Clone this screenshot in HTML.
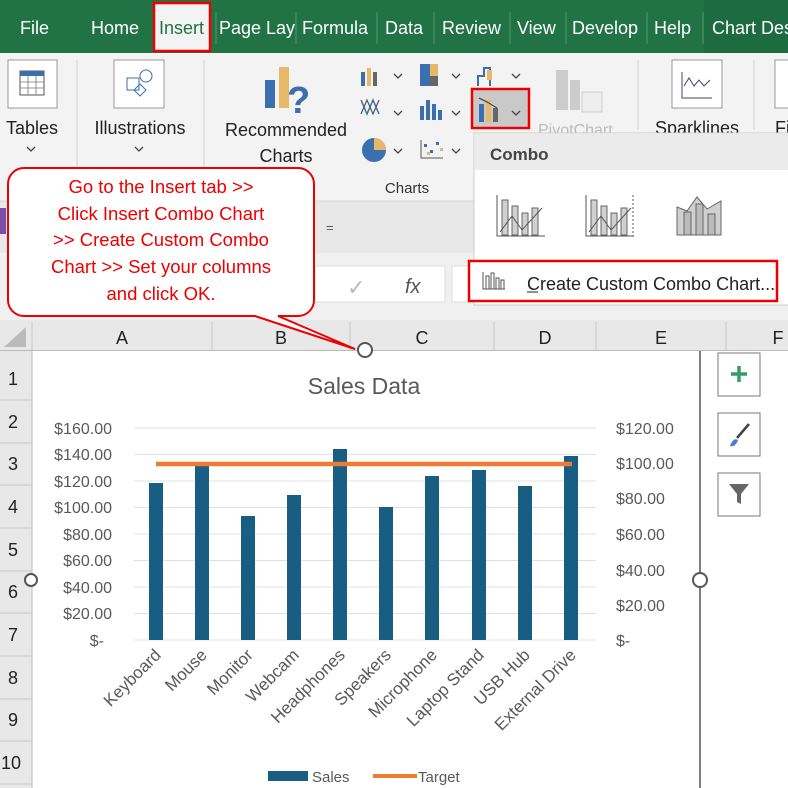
<!DOCTYPE html>
<html><head><meta charset="utf-8"><style>
html,body{margin:0;padding:0;width:788px;height:788px;overflow:hidden;background:#fff}
svg{display:block}
text{font-family:"Liberation Sans",sans-serif}
</style></head><body>
<svg width="788" height="788" viewBox="0 0 788 788" xmlns="http://www.w3.org/2000/svg">
<rect x="0" y="0" width="788" height="53" fill="#217346"/>
<rect x="704" y="0" width="84" height="53" fill="#1d6b40"/>
<rect x="154" y="3" width="56" height="48" fill="#f3f3f3"/>
<rect x="154" y="3" width="56" height="48" fill="none" stroke="#e00" stroke-width="2.5"/>
<g font-size="18" fill="#fff">
<text x="20" y="34">File</text>
<text x="91" y="34">Home</text>
<text x="159" y="34" fill="#217346">Insert</text>
<text x="219" y="34">Page Lay</text>
<text x="302" y="34">Formula</text>
<text x="385" y="34">Data</text>
<text x="442" y="34">Review</text>
<text x="517" y="34">View</text>
<text x="572" y="34">Develop</text>
<text x="654" y="34">Help</text>
<text x="712" y="34">Chart Des</text>
</g>
<g stroke="#4e9a6f" stroke-width="1">
<line x1="216" y1="12" x2="216" y2="44"/><line x1="296" y1="12" x2="296" y2="44"/><line x1="377" y1="12" x2="377" y2="44"/><line x1="434" y1="12" x2="434" y2="44"/><line x1="510" y1="12" x2="510" y2="44"/><line x1="566" y1="12" x2="566" y2="44"/><line x1="647" y1="12" x2="647" y2="44"/><line x1="703" y1="12" x2="703" y2="44"/>
</g>
<rect x="0" y="53" width="788" height="148" fill="#f3f3f3"/>
<g stroke="#d0d0d0"><line x1="77" y1="60" x2="77" y2="195"/><line x1="204" y1="60" x2="204" y2="195"/><line x1="638" y1="60" x2="638" y2="130"/><line x1="754" y1="60" x2="754" y2="130"/></g>
<rect x="8" y="60" width="49" height="48" fill="#fff" stroke="#999"/>
<rect x="20" y="71" width="24" height="24" fill="#fff" stroke="#555"/><rect x="20" y="71" width="24" height="5" fill="#3c6fb0"/>
<g stroke="#777" stroke-width="0.8"><line x1="20" y1="82" x2="44" y2="82"/><line x1="20" y1="88" x2="44" y2="88"/><line x1="28" y1="76" x2="28" y2="95"/><line x1="36" y1="76" x2="36" y2="95"/></g>
<rect x="114" y="60" width="50" height="48" fill="#fff" stroke="#999"/>
<rect x="127" y="78" width="12" height="12" fill="none" stroke="#3c6fb0"/><circle cx="146" cy="76" r="6" fill="none" stroke="#3c6fb0"/><path d="M140 84 l6 6 -6 6 -6 -6z" fill="none" stroke="#3c6fb0"/>
<g font-size="18" fill="#222">
<text x="32" y="134" text-anchor="middle">Tables</text>
<text x="140" y="134" text-anchor="middle">Illustrations</text>
<text x="286" y="136" text-anchor="middle">Recommended</text>
<text x="286" y="162" text-anchor="middle">Charts</text>
<text x="697" y="134" text-anchor="middle">Sparklines</text>
<text x="775" y="134">Fi</text>
</g>
<text x="407" y="193" font-size="15" fill="#333" text-anchor="middle">Charts</text>
<text x="538" y="135" font-size="16" fill="#bbb">PivotChart</text>
<g fill="none" stroke="#444" stroke-width="1.3"><path d="M27 147l4 4 4-4"/><path d="M135 147l4 4 4-4"/></g>
<rect x="265" y="80" width="10" height="28" fill="#3c6fb0"/><rect x="279" y="67" width="10" height="41" fill="#e8b86a"/><text x="287" y="113" font-size="38" font-weight="bold" fill="#3c6fb0">?</text>
<g>
<rect x="361" y="72" width="4" height="14" fill="#3c6fb0"/><rect x="367" y="68" width="4" height="18" fill="#e8b86a"/><rect x="373" y="72" width="4" height="14" fill="#666"/>
<rect x="420" y="64" width="10" height="22" fill="#3c6fb0"/><rect x="430" y="64" width="8" height="12" fill="#e8b86a"/><rect x="430" y="76" width="8" height="10" fill="#666"/>
<path d="M478 86v-10h6v-8h6v18" fill="none" stroke="#3c6fb0" stroke-width="2"/><rect x="487" y="70" width="5" height="10" fill="#e8b86a"/>
<path d="M361 100l6 14 6-14 6 14" fill="none" stroke="#3c6fb0" stroke-width="1.5"/><path d="M361 114l6-14 6 14 6-14" fill="none" stroke="#555" stroke-width="1.2"/>
<rect x="420" y="106" width="4" height="14" fill="#3c6fb0"/><rect x="426" y="100" width="4" height="20" fill="#3c6fb0"/><rect x="432" y="104" width="4" height="16" fill="#3c6fb0"/><rect x="438" y="110" width="4" height="10" fill="#3c6fb0"/>
<rect x="472" y="89" width="57" height="39" fill="#c9c9c9"/>
<rect x="479" y="104" width="5" height="18" fill="#3c6fb0"/><rect x="486" y="100" width="5" height="22" fill="#e8b86a"/><rect x="493" y="108" width="5" height="14" fill="#666"/><path d="M479 98l8 4 10 6" stroke="#333" fill="none"/>
<rect x="472" y="89" width="57" height="39" fill="none" stroke="#e00" stroke-width="2.5"/>
<circle cx="374" cy="150" r="12" fill="#3c6fb0"/><path d="M374 150v-12a12 12 0 0 1 12 12z" fill="#e8b86a"/>
<g fill="#3c6fb0"><rect x="424" y="144" width="3" height="3"/><rect x="430" y="150" width="3" height="3"/><rect x="436" y="142" width="3" height="3"/></g><g fill="#e8b86a"><rect x="427" y="152" width="3" height="3"/><rect x="440" y="148" width="3" height="3"/></g><path d="M421 140v18h22" fill="none" stroke="#555"/>
<g fill="none" stroke="#444" stroke-width="1.3"><path d="M394 74l4 4 4-4"/><path d="M452 74l4 4 4-4"/><path d="M512 74l4 4 4-4"/><path d="M394 111l4 4 4-4"/><path d="M452 111l4 4 4-4"/><path d="M512 111l4 4 4-4"/><path d="M394 149l4 4 4-4"/><path d="M452 149l4 4 4-4"/></g>
<rect x="556" y="70" width="12" height="40" fill="#ccc"/><rect x="570" y="80" width="10" height="30" fill="#ccc"/><rect x="582" y="92" width="20" height="20" fill="#eee" stroke="#ccc"/>
<rect x="672" y="60" width="50" height="48" fill="#fff" stroke="#999"/><path d="M682 72v26h30M684 86l5-8 5 8 5-6 5 6 6-6" fill="none" stroke="#446"/>
<rect x="775" y="60" width="20" height="48" fill="#fff" stroke="#999"/>
</g>
<rect x="0" y="201" width="788" height="52" fill="#e8e8e8"/>
<line x1="0" y1="201" x2="788" y2="201" stroke="#d6d6d6"/>
<text x="326" y="232" font-size="13" fill="#555">=</text>
<rect x="0" y="208" width="6" height="26" fill="#7a4fa8"/>
<rect x="0" y="253" width="788" height="67" fill="#f0f0f0"/>
<rect x="315" y="266" width="130" height="36" fill="#fff" stroke="#ddd"/>
<text x="347" y="295" font-size="22" fill="#bbb">✓</text>
<text x="405" y="293" font-size="20" font-style="italic" font-family="Liberation Serif" fill="#555">fx</text>
<rect x="452" y="266" width="336" height="36" fill="#fff" stroke="#ddd"/>
<rect x="0" y="320" width="788" height="31" fill="#e8e8e8"/>
<line x1="0" y1="350.5" x2="788" y2="350.5" stroke="#bbb"/>
<g stroke="#c8c8c8"><line x1="32" y1="322" x2="32" y2="350"/><line x1="212" y1="322" x2="212" y2="350"/><line x1="350" y1="322" x2="350" y2="350"/><line x1="494" y1="322" x2="494" y2="350"/><line x1="596" y1="322" x2="596" y2="350"/><line x1="726" y1="322" x2="726" y2="350"/></g>
<path d="M4 347l22-20v20z" fill="#bbb"/>
<g font-size="18" fill="#222" text-anchor="middle"><text x="122" y="344">A</text><text x="281" y="344">B</text><text x="422" y="344">C</text><text x="545" y="344">D</text><text x="661" y="344">E</text><text x="778" y="344">F</text></g>
<rect x="0" y="351" width="32" height="437" fill="#e8e8e8"/>
<line x1="32" y1="351" x2="32" y2="788" stroke="#bbb"/>
<g stroke="#c8c8c8"><line x1="0" y1="400" x2="32" y2="400"/><line x1="0" y1="443" x2="32" y2="443"/><line x1="0" y1="485" x2="32" y2="485"/><line x1="0" y1="528" x2="32" y2="528"/><line x1="0" y1="571" x2="32" y2="571"/><line x1="0" y1="613" x2="32" y2="613"/><line x1="0" y1="656" x2="32" y2="656"/><line x1="0" y1="699" x2="32" y2="699"/><line x1="0" y1="741" x2="32" y2="741"/><line x1="0" y1="784" x2="32" y2="784"/></g>
<g font-size="18" fill="#222" text-anchor="middle"><text x="13" y="385">1</text><text x="13" y="428">2</text><text x="13" y="470">3</text><text x="13" y="513">4</text><text x="13" y="556">5</text><text x="13" y="598">6</text><text x="13" y="641">7</text><text x="13" y="684">8</text><text x="13" y="726">9</text><text x="11" y="769">10</text></g>
<line x1="700" y1="351" x2="700" y2="788" stroke="#555" stroke-width="1.5"/>
<circle cx="365" cy="350" r="7" fill="#fff" stroke="#555" stroke-width="2"/>
<circle cx="700" cy="580" r="7" fill="#fff" stroke="#555" stroke-width="2"/>
<circle cx="31" cy="580" r="6" fill="#fff" stroke="#555" stroke-width="2"/>
<text x="364" y="394" font-size="23" fill="#595959" text-anchor="middle">Sales Data</text>
<g stroke="#e0e0e0"><line x1="134" y1="428" x2="596" y2="428"/><line x1="134" y1="454.5" x2="596" y2="454.5"/><line x1="134" y1="481" x2="596" y2="481"/><line x1="134" y1="507.5" x2="596" y2="507.5"/><line x1="134" y1="534" x2="596" y2="534"/><line x1="134" y1="560.5" x2="596" y2="560.5"/><line x1="134" y1="587" x2="596" y2="587"/><line x1="134" y1="613.5" x2="596" y2="613.5"/><line x1="134" y1="640" x2="596" y2="640"/></g>
<g font-size="16" fill="#595959" text-anchor="end"><text x="112" y="434">$160.00</text><text x="112" y="460">$140.00</text><text x="112" y="487">$120.00</text><text x="112" y="513">$100.00</text><text x="112" y="540">$80.00</text><text x="112" y="566">$60.00</text><text x="112" y="593">$40.00</text><text x="112" y="619">$20.00</text><text x="104" y="646">$-</text></g>
<g font-size="16" fill="#595959"><text x="616" y="434">$120.00</text><text x="616" y="469">$100.00</text><text x="616" y="504">$80.00</text><text x="616" y="540">$60.00</text><text x="616" y="576">$40.00</text><text x="616" y="611">$20.00</text><text x="616" y="646">$-</text></g>
<g fill="#175e82">
<rect x="149" y="483" width="14" height="157"/><rect x="195" y="465" width="14" height="175"/><rect x="241" y="516" width="14" height="124"/><rect x="287" y="495" width="14" height="145"/><rect x="333" y="449" width="14" height="191"/><rect x="379" y="507" width="14" height="133"/><rect x="425" y="476" width="14" height="164"/><rect x="472" y="470" width="14" height="170"/><rect x="518" y="486" width="14" height="154"/><rect x="564" y="456" width="14" height="184"/>
</g>
<line x1="156" y1="464" x2="572" y2="464" stroke="#ed7d31" stroke-width="4.5"/>
<g font-size="17" fill="#595959" text-anchor="end">
<text transform="translate(162,656) rotate(-45)">Keyboard</text>
<text transform="translate(208,656) rotate(-45)">Mouse</text>
<text transform="translate(254,656) rotate(-45)">Monitor</text>
<text transform="translate(300,656) rotate(-45)">Webcam</text>
<text transform="translate(346,656) rotate(-45)">Headphones</text>
<text transform="translate(392,656) rotate(-45)">Speakers</text>
<text transform="translate(438,656) rotate(-45)">Microphone</text>
<text transform="translate(485,656) rotate(-45)">Laptop Stand</text>
<text transform="translate(531,656) rotate(-45)">USB Hub</text>
<text transform="translate(577,656) rotate(-45)">External Drive</text>
</g>
<rect x="268" y="771" width="40" height="10" fill="#175e82"/><text x="312" y="782" font-size="15" fill="#595959">Sales</text>
<line x1="373" y1="776" x2="417" y2="776" stroke="#ed7d31" stroke-width="4"/><text x="418" y="782" font-size="15" fill="#595959">Target</text>
<g fill="#fff" stroke="#777"><rect x="718" y="353" width="42" height="43"/><rect x="718" y="413" width="42" height="43"/><rect x="718" y="473" width="42" height="43"/></g>
<path d="M739 366v16M731 374h16" stroke="#3a9a6a" stroke-width="3.5"/>
<path d="M749 424l-12 14" stroke="#444" stroke-width="2.5"/><path d="M730 446c2-6 5-8 8-6-1 4-4 7-8 6z" fill="#4a7fd0"/>
<path d="M729 484h20l-8 10v10l-4-2v-8z" fill="#666"/>
<rect x="474" y="133" width="320" height="172" fill="#fff" stroke="#ccc"/>
<rect x="475" y="134" width="313" height="36" fill="#ebebeb"/>
<text x="490" y="160" font-size="17" font-weight="bold" fill="#444">Combo</text>
<g fill="#d0d0d0" stroke="#666" stroke-width="1">
<rect x="502" y="200" width="6" height="35"/><rect x="512" y="206" width="6" height="29"/><rect x="522" y="213" width="6" height="22"/><rect x="532" y="208" width="6" height="27"/>
<rect x="591" y="200" width="6" height="35"/><rect x="601" y="206" width="6" height="29"/><rect x="611" y="213" width="6" height="22"/><rect x="621" y="208" width="6" height="27"/>
<path d="M677 235v-28l10 4 10-14 10 12 14-8v34z"/>
<rect x="684" y="212" width="7" height="23" fill="#bbb"/><rect x="696" y="204" width="7" height="31" fill="#bbb"/><rect x="708" y="214" width="7" height="21" fill="#bbb"/>
</g>
<g fill="none" stroke="#555"><path d="M497 195v41h48"/><path d="M500 232l12-16 10 14 20-22"/><path d="M586 195v41h48"/><path d="M589 232l12-16 10 14 20-22"/><path d="M633 195v41" stroke-dasharray="2 2"/></g>
<rect x="469" y="261" width="308" height="40" fill="#fff" stroke="#e00" stroke-width="2.5"/>
<g fill="none" stroke="#555"><path d="M483 272v17h22"/><rect x="486" y="276" width="3" height="13"/><rect x="491" y="273" width="3" height="16"/><rect x="496" y="278" width="3" height="11"/><rect x="501" y="280" width="3" height="9"/></g>
<text x="527" y="290" font-size="18" fill="#222">Create Custom Combo Chart...</text>
<line x1="527" y1="292" x2="538" y2="292" stroke="#222"/>
<path d="M24 168h274a16 16 0 0 1 16 16v116a16 16 0 0 1-16 16h-20l77 33-100-33h-231a16 16 0 0 1-16-16v-116a16 16 0 0 1 16-16z" fill="#fff" stroke="#e00" stroke-width="2"/>
<g font-size="18.5" fill="#e00" text-anchor="middle">
<text x="161" y="193">Go to the Insert tab &gt;&gt;</text>
<text x="161" y="220">Click Insert Combo Chart</text>
<text x="161" y="246">&gt;&gt; Create Custom Combo</text>
<text x="161" y="273">Chart &gt;&gt; Set your columns</text>
<text x="161" y="300">and click OK.</text>
</g>
</svg>
</body></html>
